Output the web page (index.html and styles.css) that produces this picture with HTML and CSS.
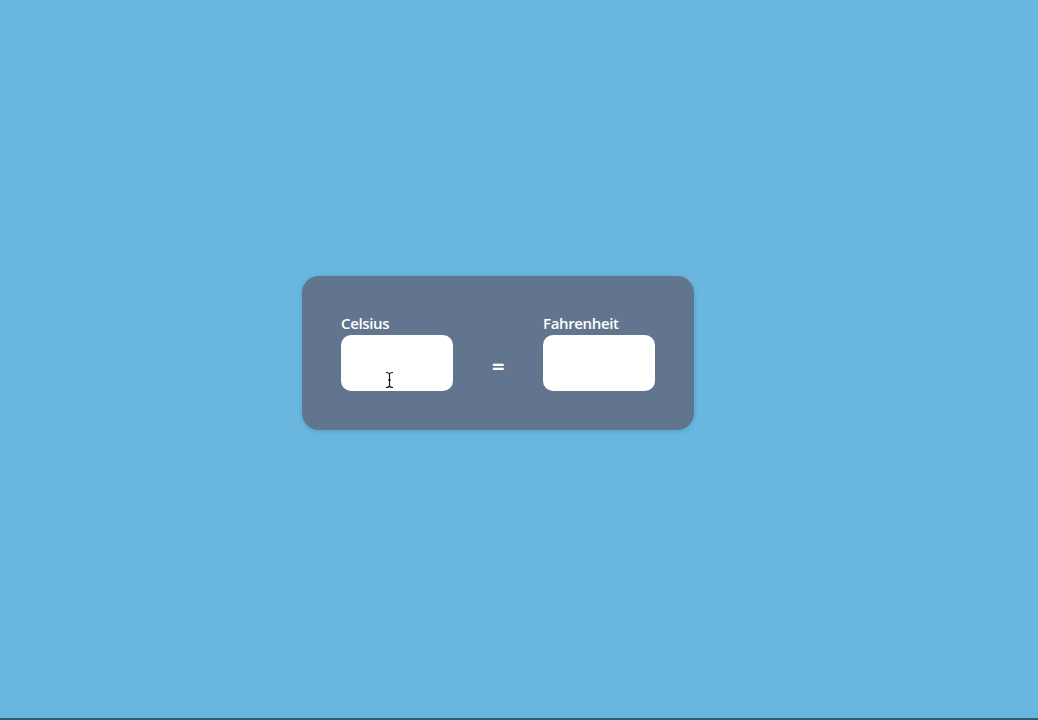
FILE: index.html
```html
<!DOCTYPE html>
<html lang="en">
<head>
<meta charset="utf-8">
<title>Temperature Converter</title>
<link rel="stylesheet" href="styles.css">
</head>
<body>
<main class="page">
  <section class="card">
    <div class="field">
      <label class="label" for="celsius">Celsius</label>
      <div class="input-wrap">
        <input class="input" id="celsius" type="text">
        <svg class="cursor" width="9" height="18" viewBox="0 0 9 18" aria-hidden="true">
          <path d="M1 1.5 Q4.5 1.5 4.5 3.5 Q4.5 1.5 8 1.5 M4.5 3.5 V14.5 M1 16.5 Q4.5 16.5 4.5 14.5 Q4.5 16.5 8 16.5 M3 9 H6" fill="none" stroke="#fff" stroke-width="2.6"/>
          <path d="M1 1.5 Q4.5 1.5 4.5 3.5 Q4.5 1.5 8 1.5 M4.5 3.5 V14.5 M1 16.5 Q4.5 16.5 4.5 14.5 Q4.5 16.5 8 16.5 M3 9 H6" fill="none" stroke="#111" stroke-width="1.1"/>
        </svg>
      </div>
    </div>
    <div class="equals">=</div>
    <div class="field">
      <label class="label" for="fahrenheit">Fahrenheit</label>
      <input class="input" id="fahrenheit" type="text">
    </div>
  </section>
</main>
<div class="bottom-edge"></div>
</body>
</html>
```
FILE: styles.css
```css
html, body {
  margin: 0;
  padding: 0;
}
body {
  background: #69b7de;
  font-family: "Open Sans", "DejaVu Sans", sans-serif;
  height: 720px;
  overflow: hidden;
  display: flex;
  flex-direction: column;
}
.page {
  flex: 1;
  display: flex;
  justify-content: flex-start;
  align-items: flex-start;
  padding-top: 276px;
  padding-left: 302px;
  box-sizing: border-box;
}
.card {
  background: #62758f;
  border-radius: 17px;
  padding: 37px 39px 39px 39px;
  display: flex;
  align-items: flex-end;
  gap: 39px;
  box-shadow: 0 1px 4px rgba(40, 70, 100, 0.25);
}
.field {
  display: flex;
  flex-direction: column;
}
.label {
  color: #ffffff;
  font-size: 15px;
  font-weight: 600;
  line-height: 21px;
  margin-bottom: 1px;
  letter-spacing: -0.35px;
}
.input-wrap {
  position: relative;
}
.input {
  display: block;
  width: 112px;
  height: 56px;
  box-sizing: border-box;
  border: none;
  border-radius: 10px;
  background: #ffffff;
  outline: none;
  padding: 0 10px;
  font-size: 16px;
}
.cursor {
  position: absolute;
  left: 44px;
  top: 36px;
}
.equals {
  color: #ffffff;
  font-size: 22px;
  font-weight: 700;
  line-height: 20px;
  width: 12px;
  text-align: center;
  margin-bottom: 16px;
}
.bottom-edge {
  height: 2px;
  background: #2b5f6c;
}
```
